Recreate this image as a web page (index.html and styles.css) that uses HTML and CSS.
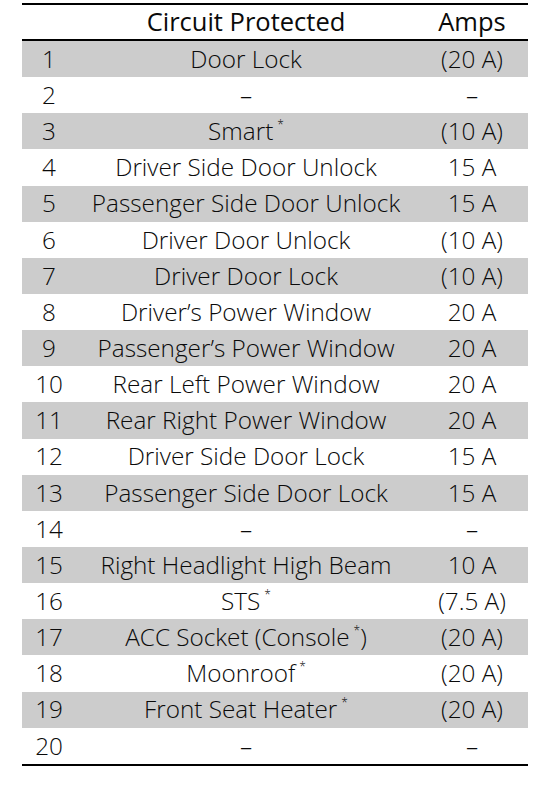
FILE: index.html
```html
<!DOCTYPE html>
<html>
<head>
<meta charset="utf-8">
<link rel="stylesheet" href="styles.css">
</head>
<body>
<table class="fuses">
<thead>
<tr><th class="num"></th><th class="circ">Circuit Protected</th><th class="amps">Amps</th></tr>
</thead>
<tbody>
<tr class="alt"><td>1</td><td>Door Lock</td><td>(20 A)</td></tr>
<tr><td>2</td><td>–</td><td>–</td></tr>
<tr class="alt"><td>3</td><td>Smart<sup>*</sup></td><td>(10 A)</td></tr>
<tr><td>4</td><td>Driver Side Door Unlock</td><td>15 A</td></tr>
<tr class="alt"><td>5</td><td>Passenger Side Door Unlock</td><td>15 A</td></tr>
<tr><td>6</td><td>Driver Door Unlock</td><td>(10 A)</td></tr>
<tr class="alt"><td>7</td><td>Driver Door Lock</td><td>(10 A)</td></tr>
<tr><td>8</td><td>Driver’s Power Window</td><td>20 A</td></tr>
<tr class="alt"><td>9</td><td>Passenger’s Power Window</td><td>20 A</td></tr>
<tr><td>10</td><td>Rear Left Power Window</td><td>20 A</td></tr>
<tr class="alt"><td>11</td><td>Rear Right Power Window</td><td>20 A</td></tr>
<tr><td>12</td><td>Driver Side Door Lock</td><td>15 A</td></tr>
<tr class="alt"><td>13</td><td>Passenger Side Door Lock</td><td>15 A</td></tr>
<tr><td>14</td><td>–</td><td>–</td></tr>
<tr class="alt"><td>15</td><td>Right Headlight High Beam</td><td>10 A</td></tr>
<tr><td>16</td><td>STS<sup>*</sup></td><td>(7.5 A)</td></tr>
<tr class="alt"><td>17</td><td>ACC Socket (Console<sup>*</sup>)</td><td>(20 A)</td></tr>
<tr><td>18</td><td>Moonroof<sup>*</sup></td><td>(20 A)</td></tr>
<tr class="alt"><td>19</td><td>Front Seat Heater<sup>*</sup></td><td>(20 A)</td></tr>
<tr><td>20</td><td>–</td><td>–</td></tr>
</tbody>
</table>
</body>
</html>
```
FILE: styles.css
```css
html, body {
  margin: 0;
  padding: 0;
  background: #ffffff;
}
body {
  padding: 3px 0 0 22px;
  font-family: "Open Sans", "Noto Sans", sans-serif;
  font-weight: 340;
  color: #0a0a0a;
}
.fuses {
  width: 506px;
  border-collapse: collapse;
  table-layout: fixed;
  font-size: 24.3px;
  border-top: 2px solid #000;
  border-bottom: 2px solid #000;
}
.fuses thead tr {
  height: 36px;
  border-bottom: 2px solid #000;
}
.fuses th {
  font-weight: 400;
  font-size: 25.5px;
  text-align: center;
  padding: 0;
  vertical-align: middle;
  line-height: 1;
}
.fuses th.num { width: 54px; }
.fuses th.circ { width: 340px; }
.fuses th.amps { width: 112px; }
.fuses td {
  text-align: center;
  padding: 0;
  height: 36.15px;
  line-height: 1;
  vertical-align: middle;
  white-space: nowrap;
}
.fuses tr.alt td {
  background: #cccccc;
}
.fuses sup {
  font-size: 12px;
  vertical-align: 0;
  position: relative;
  top: -11px;
  margin-left: 4px;
}
```
